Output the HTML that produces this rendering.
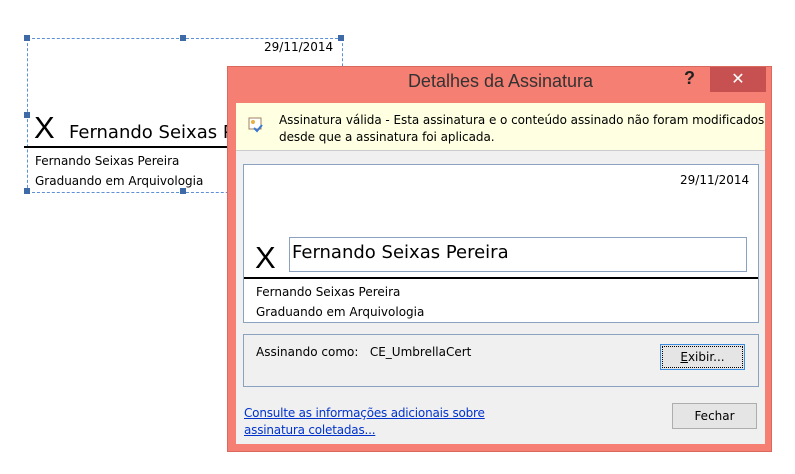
<!DOCTYPE html>
<html><head><meta charset="utf-8"><style>
body{margin:0;width:795px;height:474px;background:#fff;position:relative;overflow:hidden;font-family:"DejaVu Sans","Liberation Sans",sans-serif;font-size:12px;color:#000}
.a{position:absolute}
.h{position:absolute;width:6px;height:6px;background:#3e6aa8}
u{text-decoration:underline}
</style></head><body>
<div class="a" style="left:27px;top:38px;width:314px;height:153px;border:1px dashed #5b8fd6"></div>
<div class="h" style="left:24px;top:35px"></div><div class="h" style="left:180px;top:35px"></div><div class="h" style="left:338px;top:35px"></div>
<div class="h" style="left:24px;top:112px"></div><div class="h" style="left:24px;top:188px"></div><div class="h" style="left:180px;top:188px"></div>
<div class="a" style="left:264px;top:40px;font-size:12px">29/11/2014</div>
<div class="a" style="left:34px;top:110px;font-size:31px;font-family:'Liberation Sans',sans-serif">X</div>
<div class="a" style="left:69px;top:122px;font-size:18px;white-space:nowrap">Fernando Seixas Pereira</div>
<div class="a" style="left:24px;top:146px;width:210px;height:2px;background:#000"></div>
<div class="a" style="left:35px;top:154px">Fernando Seixas Pereira</div>
<div class="a" style="left:35px;top:174px">Graduando em Arquivologia</div>
<div class="a" style="left:227px;top:66px;width:545px;height:386px;background:#f47f72;border:1px solid #d9695d;box-sizing:border-box"></div>
<div class="a" style="left:228px;top:71px;width:545px;text-align:center;font-size:18px;color:#333;font-family:'Liberation Sans',sans-serif">Detalhes da Assinatura</div>
<div class="a" style="left:684px;top:68px;font-size:18px;font-weight:bold;color:#222;font-family:'Liberation Sans',sans-serif">?</div>
<div class="a" style="left:710px;top:67px;width:56px;height:25px;background:#c75050;color:#fff;text-align:center;font-size:16px;line-height:24px;font-weight:bold">✕</div>
<div class="a" style="left:236px;top:103px;width:529px;height:341px;background:#f0f0f0"></div>
<div class="a" style="left:236px;top:103px;width:529px;height:47px;background:#ffffe1;border-bottom:1px solid #ccc"></div>
<svg class="a" style="left:248px;top:117px" width="16" height="16"><rect x="1" y="1" width="12" height="11" fill="#fff" stroke="#a08060"/><circle cx="5" cy="5" r="2" fill="#e8b040"/><path d="M6 11 l3 3 l5-6" stroke="#3a78d0" stroke-width="2" fill="none"/></svg>
<div class="a" style="left:279px;top:112px;line-height:17px;letter-spacing:-0.05px">Assinatura válida - Esta assinatura e o conteúdo assinado não foram modificados<br>desde que a assinatura foi aplicada.</div>
<div class="a" style="left:243px;top:164px;width:516px;height:159px;background:#fff;border:1px solid #8aa2bf;box-sizing:border-box"></div>
<div class="a" style="left:680px;top:173px">29/11/2014</div>
<div class="a" style="left:255px;top:240px;font-size:31px;font-family:'Liberation Sans',sans-serif">X</div>
<div class="a" style="left:289px;top:237px;width:458px;height:35px;border:1px solid #8aa2bf;box-sizing:border-box"></div>
<div class="a" style="left:292px;top:242px;font-size:18px">Fernando Seixas Pereira</div>
<div class="a" style="left:244px;top:277px;width:514px;height:2px;background:#000"></div>
<div class="a" style="left:256px;top:285px">Fernando Seixas Pereira</div>
<div class="a" style="left:256px;top:305px">Graduando em Arquivologia</div>
<div class="a" style="left:243px;top:334px;width:516px;height:53px;border:1px solid #8aa2bf;box-sizing:border-box"></div>
<div class="a" style="left:256px;top:345px">Assinando como:&nbsp;&nbsp;&nbsp;CE_UmbrellaCert</div>
<div class="a" style="left:660px;top:344px;width:85px;height:26px;border:1px solid #3c8ce0;background:#e5e5e5;box-sizing:border-box;padding:1px"><div style="border:1px dotted #000;height:100%;box-sizing:border-box;text-align:center;line-height:20px"><u>E</u>xibir...</div></div>
<div class="a" style="left:672px;top:403px;width:85px;height:26px;border:1px solid #adadad;background:#e5e5e5;box-sizing:border-box;text-align:center;line-height:24px">Fechar</div>
<div class="a" style="left:244px;top:405px;line-height:17px;color:#0033cc;text-decoration:underline;letter-spacing:-0.2px">Consulte as informações adicionais sobre <br>assinatura coletadas...</div>
</body></html>
